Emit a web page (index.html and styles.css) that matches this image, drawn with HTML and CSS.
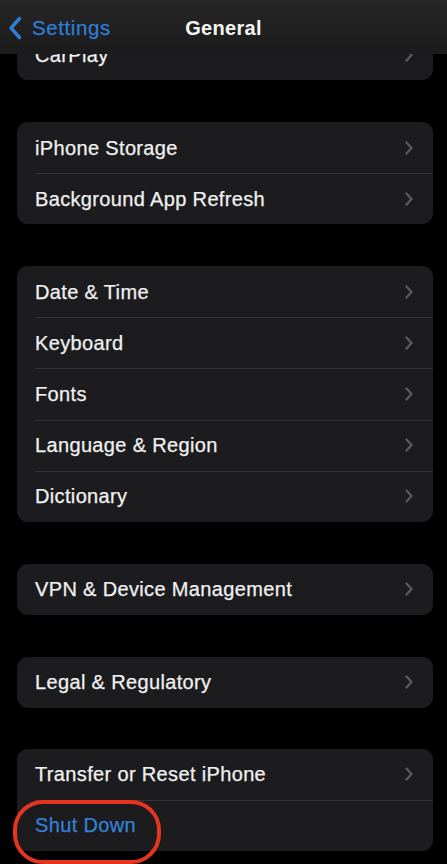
FILE: index.html
```html
<!DOCTYPE html>
<html>
<head>
<meta charset="utf-8">
<link rel="stylesheet" href="styles.css">
</head>
<body>
<div class="screen">
  <div class="content">
    <div class="card">
      <div class="row"><span class="label">CarPlay</span><svg class="chev" viewBox="0 0 8 14"><path d="M1.5 1.5 L6.5 7 L1.5 12.5"/></svg></div>
    </div>
    <div class="card">
      <div class="row"><span class="label">iPhone Storage</span><svg class="chev" viewBox="0 0 8 14"><path d="M1.5 1.5 L6.5 7 L1.5 12.5"/></svg></div>
      <div class="row"><span class="label">Background App Refresh</span><svg class="chev" viewBox="0 0 8 14"><path d="M1.5 1.5 L6.5 7 L1.5 12.5"/></svg></div>
    </div>
    <div class="card">
      <div class="row r5"><span class="label">Date &amp; Time</span><svg class="chev" viewBox="0 0 8 14"><path d="M1.5 1.5 L6.5 7 L1.5 12.5"/></svg></div>
      <div class="row r5"><span class="label">Keyboard</span><svg class="chev" viewBox="0 0 8 14"><path d="M1.5 1.5 L6.5 7 L1.5 12.5"/></svg></div>
      <div class="row r5"><span class="label">Fonts</span><svg class="chev" viewBox="0 0 8 14"><path d="M1.5 1.5 L6.5 7 L1.5 12.5"/></svg></div>
      <div class="row r5"><span class="label">Language &amp; Region</span><svg class="chev" viewBox="0 0 8 14"><path d="M1.5 1.5 L6.5 7 L1.5 12.5"/></svg></div>
      <div class="row r5"><span class="label">Dictionary</span><svg class="chev" viewBox="0 0 8 14"><path d="M1.5 1.5 L6.5 7 L1.5 12.5"/></svg></div>
    </div>
    <div class="card">
      <div class="row"><span class="label">VPN &amp; Device Management</span><svg class="chev" viewBox="0 0 8 14"><path d="M1.5 1.5 L6.5 7 L1.5 12.5"/></svg></div>
    </div>
    <div class="card">
      <div class="row"><span class="label">Legal &amp; Regulatory</span><svg class="chev" viewBox="0 0 8 14"><path d="M1.5 1.5 L6.5 7 L1.5 12.5"/></svg></div>
    </div>
    <div class="card last">
      <div class="row"><span class="label">Transfer or Reset iPhone</span><svg class="chev" viewBox="0 0 8 14"><path d="M1.5 1.5 L6.5 7 L1.5 12.5"/></svg></div>
      <div class="row shut"><span class="label blue">Shut Down</span><span class="oval"></span></div>
    </div>
  </div>
  <div class="nav">
    <div class="back">
      <svg class="backchev" viewBox="0 0 14 24"><path d="M11.5 2.5 L3 12 L11.5 21.5"/></svg>
      <span class="backtext">Settings</span>
    </div>
    <div class="title">General</div>
  </div>
</div>
</body>
</html>
```
FILE: styles.css
```css
html, body {
  margin: 0;
  padding: 0;
  background: #000;
}
.screen {
  position: relative;
  width: 447px;
  height: 864px;
  overflow: hidden;
  background: #000;
  font-family: "Liberation Sans", Arial, sans-serif;
  color: #f2f2f2;
}
.content {
  padding: 29px 14px 0 17px;
  display: flex;
  flex-direction: column;
  gap: 42px;
}
.card {
  background: #1c1c1e;
  border-radius: 11px;
  display: flex;
  flex-direction: column;
}
.card.last {
  margin-top: -1px;
}
.row {
  position: relative;
  height: 51px;
  display: flex;
  align-items: center;
  justify-content: space-between;
  padding: 0 20px 0 18px;
}
.row.r5 {
  height: 51.2px;
}
.row + .row::before {
  content: "";
  position: absolute;
  top: 0;
  left: 18px;
  right: 0;
  height: 1px;
  background: #333336;
}
.label {
  font-size: 20px;
  letter-spacing: 0.35px;
  color: #f0f0f0;
  -webkit-text-stroke: 0.25px #f0f0f0;
  margin-top: 1px;
}
.label.blue {
  color: #3581d8;
  -webkit-text-stroke: 0.25px #3581d8;
}
.chev {
  width: 8px;
  height: 14px;
  fill: none;
  stroke: #5b5b5f;
  stroke-width: 2.3;
  stroke-linecap: round;
  stroke-linejoin: round;
}
.oval {
  position: absolute;
  left: -4px;
  top: 0px;
  width: 140px;
  height: 56px;
  border: 4px solid #e5341f;
  border-radius: 30px;
}
.nav {
  position: absolute;
  top: 0;
  left: 0;
  width: 447px;
  height: 54px;
  background: linear-gradient(#262626, #1b1b1b);
  display: flex;
  align-items: center;
  justify-content: center;
}
.back {
  position: absolute;
  left: 8px;
  top: 16px;
  display: flex;
  align-items: center;
  gap: 10px;
}
.backchev {
  width: 14px;
  height: 24px;
  fill: none;
  stroke: #2f7fd6;
  stroke-width: 3.4;
  stroke-linecap: round;
  stroke-linejoin: round;
}
.backtext {
  font-size: 20.5px;
  letter-spacing: 0.6px;
  color: #2f7fd6;
  -webkit-text-stroke: 0.25px #2f7fd6;
}
.title {
  font-size: 20px;
  font-weight: bold;
  letter-spacing: 0.3px;
  color: #f4f4f4;
  margin-top: 3px;
}
```
